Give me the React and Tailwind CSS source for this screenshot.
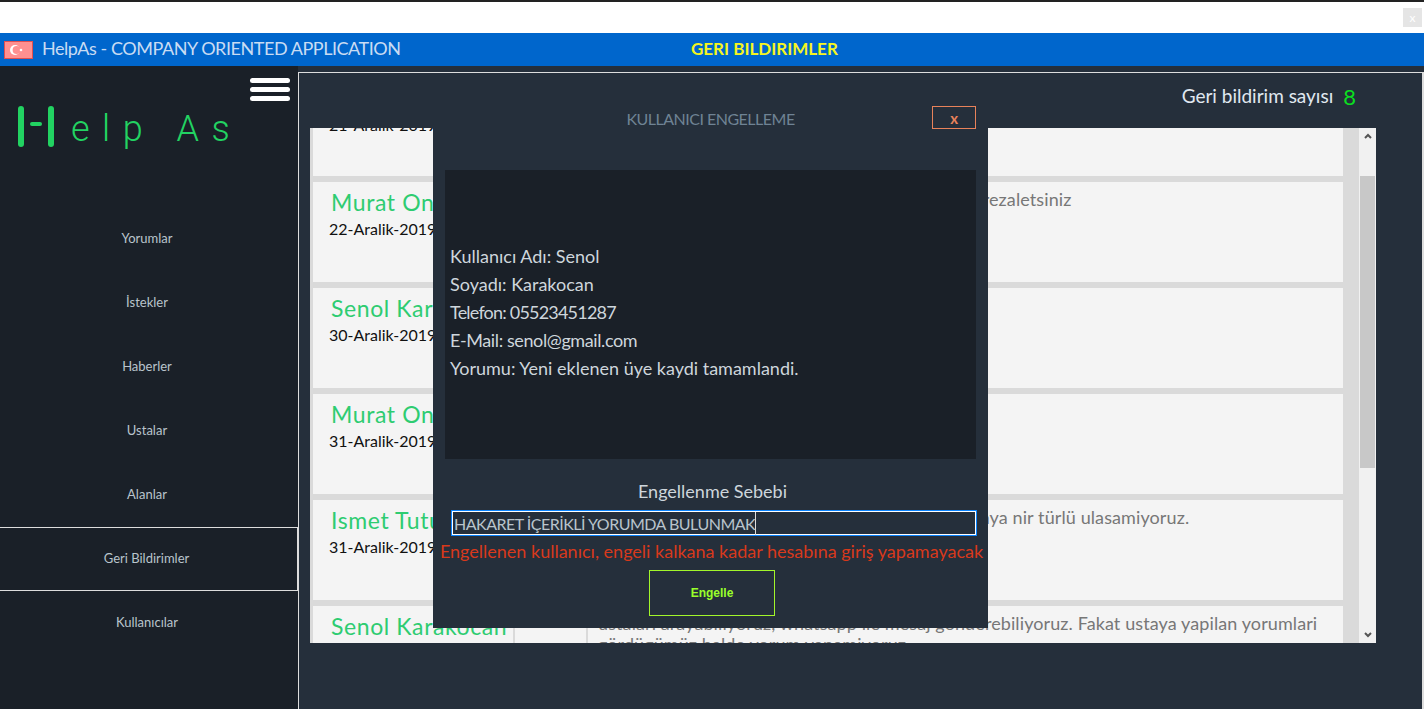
const navItems = ["Yorumlar", "İstekler", "Haberler", "Ustalar", "Alanlar", "Geri Bildirimler", "Kullanıcılar"];

const feedback = [
  { name: "Murat Oncel", date: "22-Aralik-2019", text: "Uygulamaniz cok yavas calisiyor, yazik ki tam bir rezaletsiniz" },
  { name: "Senol Karakocan", date: "30-Aralik-2019", text: "Yeni eklenen üye kaydi tamamlandi." },
  { name: "Murat Oncel", date: "31-Aralik-2019", text: "Ustalarin listesi düzgün gelmiyor." },
  { name: "Ismet Tutu", date: "31-Aralik-2019", text: "Ustalara telefon ile ulasmaya calisiyoruz ama ustaya nir türlü ulasamiyoruz." },
  { name: "Senol Karakocan", date: "01-Ocak-2020", text: "ustalari arayabiliyoruz, whatsapp ile mesaj gönderebiliyoruz. Fakat ustaya yapilan yorumlari gördügümüz halde yorum yapamiyoruz." },
];

function FeedbackRow({ item }) {
  return (
    <div className="flex h-[100px] shrink-0 bg-[#f4f4f4]">
      <div className="w-[202px] shrink-0 border-r-2 border-[#dadada] pl-[18px] pt-[6px]">
        <div className="text-[23px] leading-[28px] tracking-[0.6px] whitespace-nowrap text-[#2ecc71]">{item.name}</div>
        <div className="ml-[-2px] mt-[1px] text-[16px] leading-[24px] text-[#111]">{item.date}</div>
      </div>
      <div className="w-[73px] shrink-0 border-r-2 border-[#dadada]"></div>
      <div className="flex-1 pl-[10px] pr-[20px] pt-[7px] text-[18px] leading-[21px] tracking-[0.1px] text-[#777]">{item.text}</div>
    </div>
  );
}

function Sidebar() {
  return (
    <aside className="flex w-[298px] shrink-0 flex-col bg-[#1a2028]">
      <div className="flex h-[141px] shrink-0 justify-between pl-[18px] pr-[8px] pt-[12px]">
        <div className="flex items-end gap-[17px] self-start pt-[28px]">
          <div className="flex h-[41px] w-[36px] items-center justify-between">
            <span className="h-full w-[6px] rounded-[3px] bg-[#22d362]"></span>
            <span className="mb-[6px] h-[4px] w-[12px] rounded-[2px] bg-[#22d362]"></span>
            <span className="h-full w-[6px] rounded-[3px] bg-[#22d362]"></span>
          </div>
          <span className="mb-[-3px] font-['Roboto',sans-serif] text-[36px] font-light leading-[42px] tracking-[12.5px] whitespace-nowrap text-[#22d362]">elp As</span>
        </div>
        <div className="flex w-[40px] flex-col gap-[4px] self-start">
          <span className="h-[5px] rounded-full bg-white"></span>
          <span className="h-[5px] rounded-full bg-white"></span>
          <span className="h-[5px] rounded-full bg-white"></span>
        </div>
      </div>
      <nav className="flex flex-col">
        {navItems.map((label) => (
          <div
            key={label}
            className={
              label === "Geri Bildirimler"
                ? "flex h-[64px] items-center justify-center border-y border-r border-[#ddd] pb-[1px] pr-[4px] text-[13px] text-[#b9c4cc]"
                : "flex h-[64px] items-center justify-center pb-[1px] pr-[4px] text-[13px] text-[#b9c4cc]"
            }
          >
            {label}
          </div>
        ))}
      </nav>
    </aside>
  );
}

function BlockModal() {
  return (
    <div className="absolute left-[134px] top-0 flex h-[555px] w-[555px] flex-col bg-[#252f3b] px-[12px]">
      <div className="relative flex h-[97px] shrink-0 justify-center pt-[33px] text-[16px] leading-[26px] tracking-[-0.5px] text-[#6f8394]">
        KULLANICI ENGELLEME
        <button className="absolute right-0 top-[33px] h-[23px] w-[44px] border border-[#e8825a] text-[15px] font-bold leading-[18px] text-[#e8825a]">x</button>
      </div>
      <div className="flex h-[289px] shrink-0 flex-col justify-center bg-[#1a2028] pb-[5px] pl-[5px] text-[18px] leading-[28px] text-[#ced6dc]">
        <div>Kullanıcı Adı: Senol</div>
        <div>Soyadı: Karakocan</div>
        <div className="tracking-[-0.8px]">Telefon: 05523451287</div>
        <div className="tracking-[-0.4px]">E-Mail: senol@gmail.com</div>
        <div>Yorumu: Yeni eklenen üye kaydi tamamlandi.</div>
      </div>
      <div className="mt-[20px] pl-[4px] text-center text-[18px] leading-[24px] text-[#ced6dc]">Engellenme Sebebi</div>
      <div className="ml-[7px] mt-[8px] flex h-[24px] w-[524px] shrink-0 items-center border border-white pl-[1px] pt-[2px] text-[16px] tracking-[-0.5px] text-[#b9c4cc] outline outline-[#0a84ff]">
        <span className="whitespace-nowrap border-r border-[#ddd]">HAKARET İÇERİKLİ YORUMDA BULUNMAK</span>
      </div>
      <div className="ml-[-6px] mr-[-8px] mt-[4px] whitespace-nowrap text-center text-[18px] leading-[24px] text-[#d8391b]">Engellenen kullanıcı, engeli kalkana kadar hesabına giriş yapamayacak</div>
      <button className="ml-[204px] mt-[7px] h-[46px] w-[126px] border border-[#a2f52a] font-['Liberation_Sans',sans-serif] text-[12px] font-bold text-[#9aff2a]">Engelle</button>
    </div>
  );
}

export default function App() {
  return (
    <div className="flex h-[709px] w-[1424px] flex-col overflow-hidden bg-[#252f3b] font-['Lato',sans-serif]">
      <div className="h-[2px] shrink-0 bg-[#222]"></div>
      <div className="flex h-[31px] shrink-0 items-center justify-end bg-white pr-[2px]">
        <span className="flex h-[19px] w-[19px] items-center justify-center bg-[#e5e5e5] text-[12px] text-white">x</span>
      </div>
      <header className="relative flex h-[33px] shrink-0 items-center bg-[#0066cc] pl-[4px]">
        <svg width="29" height="18" viewBox="0 0 29 18" className="shrink-0">
          <rect x="0.5" y="0.5" width="28" height="17" fill="#ff9090" stroke="#e05050" />
          <circle cx="11" cy="9" r="5" fill="#fff" />
          <circle cx="12.6" cy="9" r="4" fill="#ff9090" />
          <circle cx="17" cy="9" r="1.3" fill="#fff" />
        </svg>
        <span className="mb-[3px] ml-[9px] text-[18px] tracking-[-0.45px] whitespace-nowrap text-[#c9dcf3]">HelpAs - COMPANY ORIENTED APPLICATION</span>
        <span className="absolute left-[691px] mb-[2px] text-[17px] font-bold text-[#f5f51e]">GERI BILDIRIMLER</span>
      </header>
      <div className="flex min-h-0 flex-1">
        <Sidebar />
        <main className="relative mt-[6px] flex min-w-0 flex-1 flex-col border-l border-r-2 border-t border-[#ddd] pl-[11px]">
          <div className="flex h-[55px] shrink-0 items-center justify-end gap-[10px] pb-[8px] pr-[66px] text-[19px] text-[#e0e8f0]">
            <span>Geri bildirim sayısı</span>
            <span className="text-[22px] text-[#0bdf20]">8</span>
          </div>
          <section className="flex h-[515px] w-[1066px] shrink-0 overflow-hidden bg-[#dadada]">
            <div className="flex w-[1033px] shrink-0 flex-col gap-[6px] pl-[3px]">
              <div className="h-[48px] shrink-0 overflow-hidden bg-[#f4f4f4] pl-[16px]">
                <div className="mt-[-15px] text-[16px] leading-[24px] text-[#111]">21-Aralik-2019</div>
              </div>
              {feedback.map((item, i) => (
                <FeedbackRow key={i} item={item} />
              ))}
            </div>
            <div className="ml-auto flex w-[17px] flex-col items-center bg-[#f1f1f1]">
              <span className="flex h-[48px] w-full justify-center pt-[5px] text-[#555]">
                <svg width="8" height="6" viewBox="0 0 8 6"><path d="M1 5 L4 2 L7 5" fill="none" stroke="currentColor" strokeWidth="2" /></svg>
              </span>
              <span className="h-[292px] w-[15px] bg-[#c8c8c8]"></span>
              <span className="mt-auto flex w-full justify-center pb-[5px] text-[#555]">
                <svg width="8" height="6" viewBox="0 0 8 6"><path d="M1 1 L4 4 L7 1" fill="none" stroke="currentColor" strokeWidth="2" /></svg>
              </span>
            </div>
          </section>
          <BlockModal />
        </main>
      </div>
    </div>
  );
}
